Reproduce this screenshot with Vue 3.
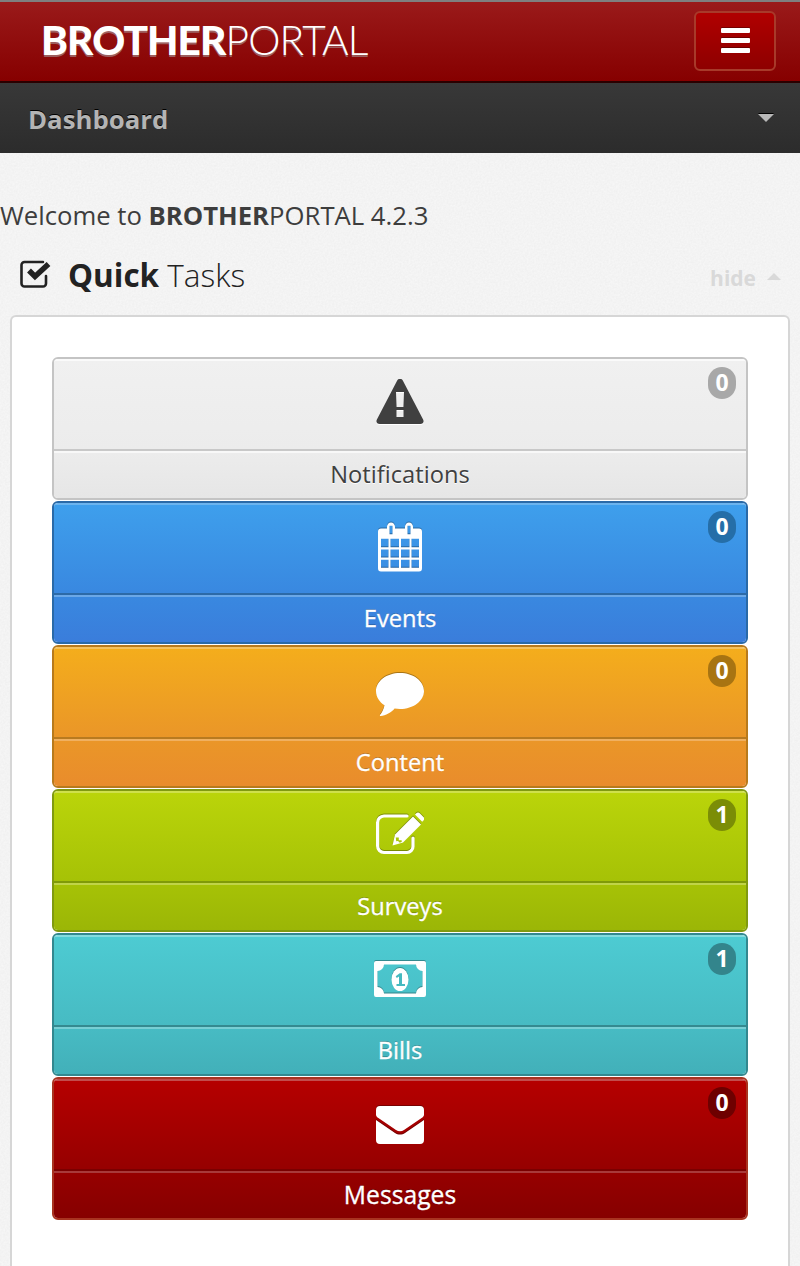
<script setup>
const tiles = [
  { name: 'Notifications', icon: 'warning', count: 0, theme: 'grey' },
  { name: 'Events', icon: 'calendar', count: 0, theme: 'blue' },
  { name: 'Content', icon: 'comment', count: 0, theme: 'orange' },
  { name: 'Surveys', icon: 'edit', count: 1, theme: 'green' },
  { name: 'Bills', icon: 'money', count: 1, theme: 'teal' },
  { name: 'Messages', icon: 'envelope', count: 0, theme: 'red' },
]
</script>

<template>
  <div class="page">
    <!-- top bar -->
    <header class="navbar">
      <div class="brand"><b>BROTHER</b><span>PORTAL</span></div>
      <button class="menu-btn" aria-label="Menu">
        <i></i><i></i><i></i>
      </button>
    </header>

    <nav class="subnav">
      <span class="subnav-title">Dashboard</span>
      <span class="caret-down"></span>
    </nav>

    <main class="content">
      <p class="welcome">Welcome to <b>BROTHER</b>PORTAL 4.2.3</p>

      <div class="section-head">
        <svg class="check-icon" viewBox="0 0 34 30">
          <path d="M26 16v7.500a3 3 0 0 1-3 3H4.500a3 3 0 0 1-3-3V5a3 3 0 0 1 3-3H23" fill="none" stroke="#222" stroke-width="2.600" stroke-linecap="round"/>
          <path d="M9 10.500l6 6L28.500 4" fill="none" stroke="#222" stroke-width="5.500"/>
        </svg>
        <h2 class="section-title"><b>Quick</b> Tasks</h2>
        <span class="hide-link">hide<span class="caret-up"></span></span>
      </div>

      <section class="panel">
        <a v-for="t in tiles" :key="t.name" class="tile" :class="t.theme">
          <div class="tile-top">
            <span class="badge">{{ t.count }}</span>

            <svg v-if="t.icon === 'warning'" class="icon" viewBox="0 0 48 48">
              <path fill-rule="evenodd" fill="currentColor" d="M21.200 1.500c1.300-2.300 4.300-2.300 5.600 0l20.300 39c1.300 2.300-.1 4.500-2.800 4.500H3.700c-2.700 0-4.100-2.200-2.800-4.500zM20 13l.6 15h6.800l.6-15zM20.500 31v7h7v-7z"/>
            </svg>

            <svg v-else-if="t.icon === 'calendar'" class="icon calendar" viewBox="0 0 48 46.500" preserveAspectRatio="none">
              <path fill-rule="evenodd" fill="currentColor" d="M5 6h6V4.500a4 4 0 0 1 8 0V6h10V4.500a4 4 0 0 1 8 0V6h6a3 3 0 0 1 3 3v34a3 3 0 0 1-3 3H5a3 3 0 0 1-3-3V9a3 3 0 0 1 3-3zM13.500 3.500v8h3v-8zM31.500 3.500v8h3v-8zM5 15.500v8h7.500v-8zM14.500 15.500v8H23v-8zM25 15.500v8h8.500v-8zM35.500 15.500v8H43v-8zM5 25.500v7.500h7.500v-7.500zM14.500 25.500v7.500H23v-7.500zM25 25.500v7.500h8.500v-7.500zM35.500 25.500v7.500H43v-7.500zM5 35v7.500h7.500V35zM14.500 35v7.500H23V35zM25 35v7.500h8.500V35zM35.500 35v7.500H43V35z"/>
            </svg>

            <svg v-else-if="t.icon === 'comment'" class="icon comment" viewBox="0 0 48 48">
              <path fill="currentColor" d="M24 0C37.300 0 48 8 48 18S37.300 36 24 36c-1.900 0-3.700-.1-5.400-.4C15.500 39.500 9.500 42.800 4.700 43c-.8 0-1.100-.8-.6-1.300 1.900-2 3.500-5.300 4.400-9.500C3.300 29 0 23.800 0 18 0 8 10.700 0 24 0z"/>
            </svg>

            <svg v-else-if="t.icon === 'edit'" class="icon" viewBox="0 0 48 48">
              <path fill="none" stroke="currentColor" stroke-width="3.200" stroke-linecap="round" d="M31 5H8A6.500 6.500 0 0 0 1.600 11.500V35A6.500 6.500 0 0 0 8 41.500h23a6 6 0 0 0 6-6V27"/>
              <path fill="currentColor" d="M16.500 34.500L19 23.500 37 5.500 45 13.500 27 31.500z"/>
              <path fill="currentColor" d="M39 3.500l1-1a2.800 2.800 0 0 1 4 0l3.200 3.200a2.800 2.800 0 0 1 0 4l-1 1z"/>
              <path fill="#a9c607" d="M19.800 26.500h3v2.800h2.800l.2 1.500-2 1-1.800-1.800-1.800.3z"/>
            </svg>

            <svg v-else-if="t.icon === 'money'" class="icon money" viewBox="0 0 52 36">
              <path fill-rule="evenodd" fill="currentColor" d="M2 0h48a2 2 0 0 1 2 2v32a2 2 0 0 1-2 2H2a2 2 0 0 1-2-2V2a2 2 0 0 1 2-2zM10 3.500A6.500 6.500 0 0 1 3.500 10v16A6.500 6.500 0 0 1 10 32.500h32A6.500 6.500 0 0 1 48.500 26V10A6.500 6.500 0 0 1 42 3.500z"/>
              <ellipse cx="26" cy="18.500" rx="8.500" ry="11.500" fill="currentColor"/>
              <path fill="#46b9c0" d="M22.500 25v-2h2.500v-7.500l-2.200 1.500-1.100-1.800 4-2.900h2.300V23H31v2z"/>
            </svg>

            <svg v-else class="icon envelope" viewBox="0 0 48 48">
              <path fill="currentColor" d="M4 0h40a4 4 0 0 1 4 4v5c-.3 1.200-1.200 2.300-2.400 3.100L28 24c-2.500 1.700-5.500 1.700-8 0L2.400 12.100C1.200 11.300.3 10.200 0 9V4a4 4 0 0 1 4-4z"/>
              <path fill="currentColor" d="M0 14l19 13c3 2 7 2 10 0l19-13v20a4 4 0 0 1-4 4H4a4 4 0 0 1-4-4z"/>
            </svg>
          </div>
          <div class="tile-label">{{ t.name }}</div>
        </a>
      </section>
    </main>
  </div>
</template>

<style>
html, body { margin: 0; background: #f3f3f3; }
#app { height: 1266px; overflow: hidden; }
</style>

<style scoped>
.page {
  font-family: "Open Sans", "Noto Sans", sans-serif;
  color: #333;
  background-color: #eeeeee;
  background-image: url("data:image/svg+xml,%3Csvg xmlns='http://www.w3.org/2000/svg' width='200' height='200'%3E%3Cfilter id='n'%3E%3CfeTurbulence type='fractalNoise' baseFrequency='.55' numOctaves='2'/%3E%3CfeColorMatrix values='0 0 0 0 1 0 0 0 0 1 0 0 0 0 1 .6 0 0 0 0'/%3E%3C/filter%3E%3Crect width='200' height='200' filter='url(%23n)'/%3E%3C/svg%3E");
}

/* ---- navbar ---- */
.navbar {
  box-sizing: border-box;
  height: 83px;
  display: flex;
  align-items: center;
  justify-content: space-between;
  padding: 0 24px 0 41px;
  background: linear-gradient(#9a1a1a, #860000);
  border-top: 2px solid #7f7f7f;
  border-bottom: 2px solid #2a0000;
}
.brand {
  font-family: Lato, "Open Sans", sans-serif;
  font-size: 40.700px;
  line-height: 1;
  letter-spacing: -0.9px;
  color: #fff;
  text-shadow: 0 2px 0 rgba(170, 170, 170, 0.55);
  margin-top: -3px;
}
.brand b { font-weight: 900; }
.brand span { font-weight: 300; }

.menu-btn {
  width: 82px;
  height: 60px;
  display: flex;
  flex-direction: column;
  align-items: center;
  justify-content: center;
  gap: 5px;
  padding: 0;
  margin-top: -2px;
  border: 2px solid #a83a2a;
  border-radius: 6px;
  background: linear-gradient(#b00000, #8e0000);
}
.menu-btn i {
  display: block;
  width: 29px;
  height: 5px;
  border-radius: 1px;
  background: #fff;
  box-shadow: 0 -1px 0 rgba(0, 0, 0, 0.3);
}

/* ---- sub nav ---- */
.subnav {
  box-sizing: border-box;
  height: 70px;
  display: flex;
  align-items: center;
  justify-content: space-between;
  padding: 0 26px 0 28px;
  background: linear-gradient(#383838, #2c2c2c);
}
.subnav-title {
  font-size: 25.800px;
  font-weight: 700;
  color: #b4b4b4;
  text-shadow: 0 -1px 0 #000;
  margin-top: 1px;
}
.caret-down {
  width: 0;
  height: 0;
  border-left: 8px solid transparent;
  border-right: 8px solid transparent;
  border-top: 8px solid #b8b8b8;
  filter: drop-shadow(0 -1px 0 #000);
}

/* ---- content ---- */
.welcome {
  margin: 0;
  padding-top: 46px;
  font-size: 25.700px;
  line-height: 34px;
  color: #3d3d3d;
}
.section-head {
  display: flex;
  align-items: center;
  height: 50px;
  margin-top: 17px;
  padding: 0 19px 0 20px;
  margin-bottom: 15px;
}
.check-icon { width: 34px; height: 30px; margin-right: 14px; }
.section-title {
  margin: 0;
  font-size: 31.500px;
  line-height: 50px;
  font-weight: 300;
  color: #222;
}
.section-title b { font-weight: 700; }
.hide-link {
  margin-left: auto;
  margin-top: 6px;
  font-size: 21px;
  font-weight: 700;
  color: #d9d9d9;
  display: flex;
  align-items: center;
}
.caret-up {
  width: 0;
  height: 0;
  margin-left: 11px;
  margin-top: -4px;
  border-left: 7px solid transparent;
  border-right: 7px solid transparent;
  border-bottom: 7px solid #d9d9d9;
}

.panel {
  margin: 0 10px;
  padding: 40px 40px 60px;
  display: flex;
  flex-direction: column;
  gap: 1px;
  background: #fff;
  border: 2px solid #d6d6d6;
  border-radius: 6px;
}

/* ---- tiles ---- */
.tile {
  --edge: #c4c4c4;
  --line-dark: #c8c8c8;
  --line-light: #f8f8f8;
  --hi: #fafafa;
  --badge: #a8a8a8;
  display: block;
  box-sizing: border-box;
  height: 143px;
  color: #fff;
  border: 2px solid var(--edge);
  border-radius: 6px;
  overflow: hidden;
  text-decoration: none;
}
.tile-top {
  position: relative;
  box-sizing: border-box;
  height: 92px;
  background: linear-gradient(var(--a), var(--b));
  border-top: 2px solid var(--hi);
  border-bottom: 2px solid var(--line-dark);
  display: flex;
  justify-content: center;
  align-items: flex-start;
  padding-top: 18px;
}
.tile-label {
  box-sizing: border-box;
  height: 47px;
  background: linear-gradient(var(--b), var(--c));
  border-top: 2px solid var(--line-light);
  text-align: center;
  font-size: 23.700px;
  line-height: 43px;
  -webkit-text-stroke: 0.3px currentColor;
  text-shadow: 0 -1px 0 rgba(0, 0, 0, 0.25);
}
.icon {
  width: 48px;
  height: 48px;
  filter: drop-shadow(0 -1px 0 rgba(0, 0, 0, 0.3));
}
.icon.calendar { height: 50px; margin-top: -1px; }
.icon.comment { margin-top: 6px; }
.icon.money { width: 52px; height: 36px; margin-top: 6px; }
.icon.envelope { margin-top: 7px; }
.badge {
  position: absolute;
  top: 6px;
  right: 10px;
  min-width: 28px;
  height: 32px;
  box-sizing: border-box;
  border-radius: 14px;
  background: var(--badge);
  text-align: center;
  font-size: 23px;
  font-weight: 700;
  line-height: 30px;
  color: #fff;
}

.grey {
  --a: #f0f0f0; --b: #ececec; --c: #e6e6e6;
  color: #404040;
}
.grey .tile-label { -webkit-text-stroke: 0; text-shadow: 0 1px 0 #fff; }
.grey .icon { filter: drop-shadow(0 1px 0 #fff); }

.blue {
  --a: #3e9fec; --b: #3988e0; --c: #3a7ddb;
  --edge: #2a6aa8; --line-dark: #2c6aa8; --line-light: #6aa8e8; --hi: #6cb4ee; --badge: #256ea8;
}
.orange {
  --a: #f4ad1c; --b: #ea9628; --c: #e98c2c;
  --edge: #b87a1c; --line-dark: #b87a20; --line-light: #f0b060; --hi: #f6c25c; --badge: #a87412;
}
.green {
  --a: #bad40a; --b: #a6c206; --c: #9bb606;
  --edge: #809a10; --line-dark: #809a08; --line-light: #c0d448; --hi: #cfe04c; --badge: #7b8d06;
}
.teal {
  --a: #4dcbd2; --b: #47bbc3; --c: #42b0b9;
  --edge: #33888f; --line-dark: #358a90; --line-light: #78cfd4; --hi: #82dce0; --badge: #33858c;
}
.red {
  --a: #b50000; --b: #960000; --c: #860000;
  --edge: #a83320; --line-dark: #7a0000; --line-light: #a83a3a; --hi: #c24d4d; --badge: #6e0000;
}
.red .tile-label { font-size: 24.700px; }
</style>
